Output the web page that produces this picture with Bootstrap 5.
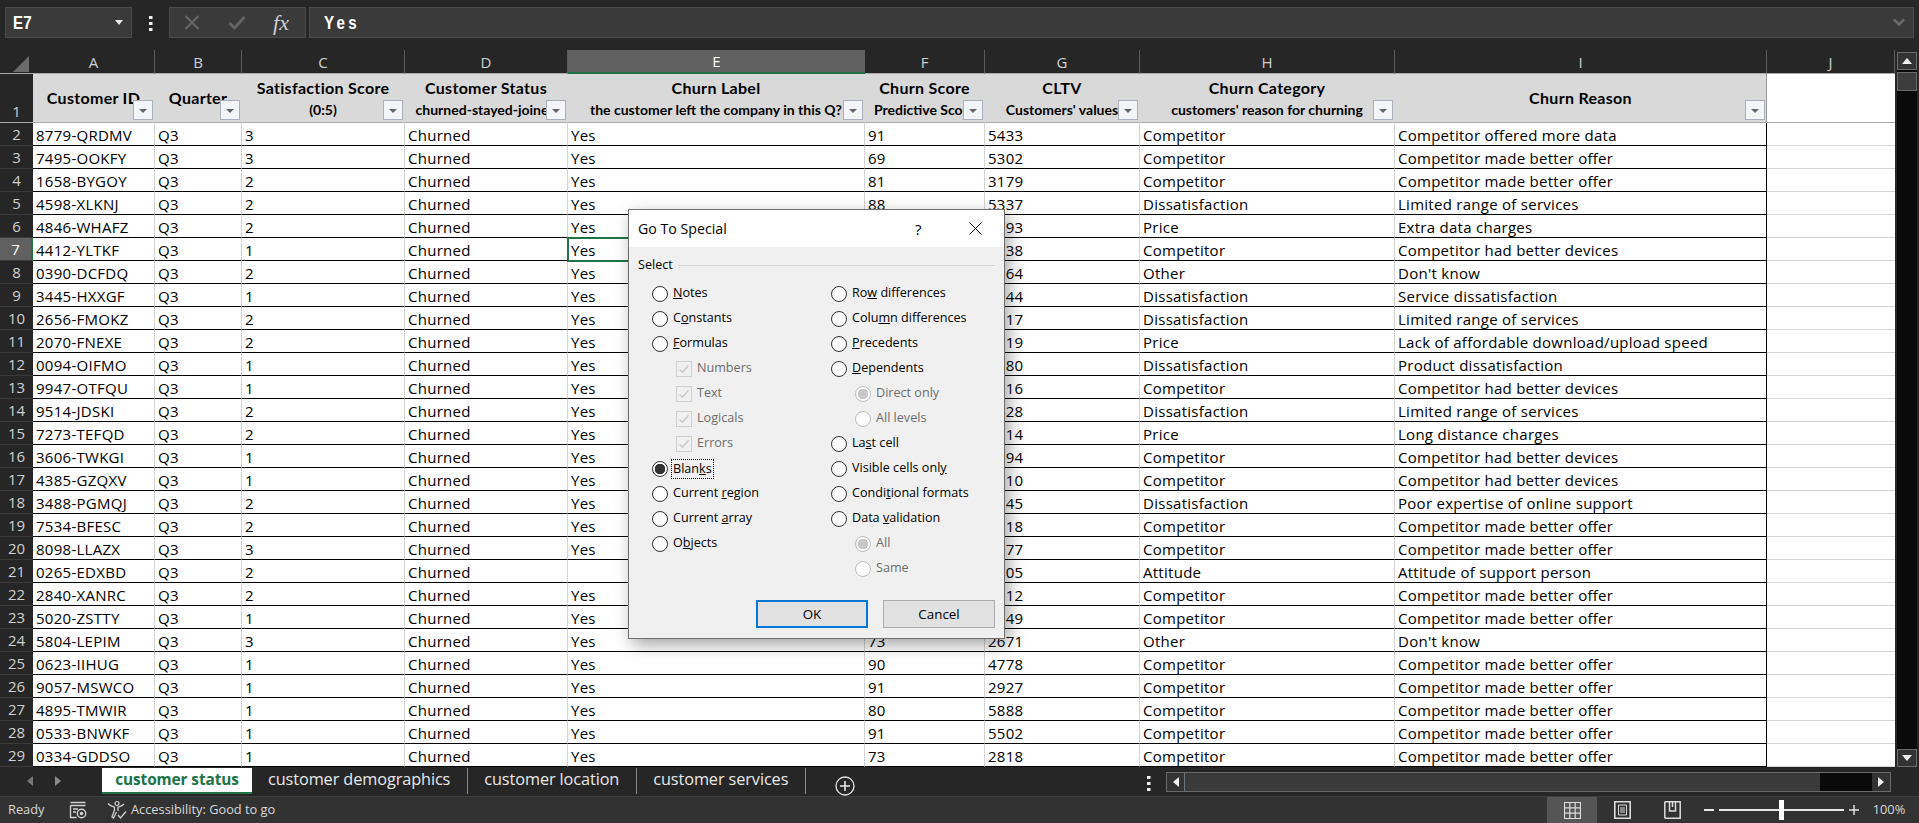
<!DOCTYPE html>
<html lang="en">
<head>
<meta charset="utf-8">
<title>Go To Special</title>
<link href="https://cdn.jsdelivr.net/npm/bootstrap@5.3.0/dist/css/bootstrap.min.css" rel="stylesheet">
<style>
html,body{height:100%;}
body{background:#262626;overflow:hidden;font-family:"Open Sans","Noto Sans",sans-serif;position:relative;}
.app-shell{height:823px;}
/* formula bar */
.fx-bar{height:50px;flex:none;padding:7px 5px 0;background:#262626;}
.fx-box{height:31px;background:#3a3a3a;border:1px solid #4a4a4a;}
.name-box{width:127px;padding:0 8px 0 7px;}
.strong-narrow{display:inline-block;font-family:"Liberation Sans",sans-serif;font-weight:700;color:#fff;font-size:19px;line-height:1;transform:scaleX(.8);transform-origin:left center;}
.dots-grip{width:37px;}
.fn-box{width:137px;padding:0 14px;}
.fn-text{font-family:"Liberation Serif",serif;font-style:italic;font-size:22px;color:#cfcfcf;line-height:1;margin-right:2px;}
.formula-box{margin-left:3px;flex:1;padding:0 8px 0 14px;}
.formula-val{letter-spacing:4px;}
/* sheet */
.sheet-wrap{height:717px;flex:none;overflow:hidden;}
.sheet-scroll-host{width:1895px;flex:none;overflow:hidden;background:#fff;}
.sheet-grid{table-layout:fixed;width:1895px;border-collapse:separate;border-spacing:0;font-family:"Open Sans","Noto Sans",sans-serif;font-size:15px;letter-spacing:.27px;color:#000;}
.sheet-grid td{height:23px;padding:1px 0 0 3px;line-height:20px;white-space:nowrap;overflow:hidden;border-right:1px solid #d4d4d4;border-bottom:1px solid #000;background:#fff;}
.sheet-grid td.edge{border-right:1px solid #000;}
.sheet-grid td.free{border-bottom:1px solid #d4d4d4;border-right:0;}
.sheet-grid td.active-cell{outline:2px solid #217346;outline-offset:-1px;position:relative;}
.sheet-grid thead th{height:24px;background:#262626;color:#d0d0d0;font-family:"Open Sans",sans-serif;font-weight:400;font-size:15px;letter-spacing:0;text-align:center;border-right:1px solid #5a5a5a;border-bottom:1px solid #aaa;padding:0;line-height:22px;}
.sheet-grid thead th.col-on{background:#606060;color:#fff;border-bottom:2px solid #217346;border-right:0;}
.sheet-grid thead th.corner{border-right:0;position:relative;vertical-align:bottom;}
.corner svg{display:block;}
.sheet-grid tbody th{background:#262626;color:#d0d0d0;font-family:"Open Sans",sans-serif;font-weight:400;font-size:15px;letter-spacing:0;text-align:center;padding:0;border-bottom:1px solid #3a3a3a;line-height:22px;}
.sheet-grid tbody th.row-on{background:#606060;color:#fff;border-right:2px solid #217346;}
.sheet-grid tr.head-row th.num{height:49px;vertical-align:bottom;border-bottom:1px solid #aaa;}
.sheet-grid tr.head-row td{height:49px;padding:0;background:#d9d9d9;border-bottom:1px solid #aaa;border-right:1px solid #d9d9d9;position:relative;text-align:center;font-family:Lato,"Liberation Sans",sans-serif;font-weight:700;line-height:1;letter-spacing:.3px;}
.sheet-grid tr.head-row td.free{background:#fff;border-right:0;}
.sheet-grid tr.head-row td.edge{border-right:1px solid #999;}
.head-main{display:block;font-size:16px;}
.head-sub{display:block;font-size:14px;margin-top:7px;letter-spacing:0;}
.head-one{font-size:16px;padding-bottom:1px;}
.filter-btn{position:absolute;right:1px;bottom:2px;width:20px;height:20px;background:#f3f5f9;border:1px solid #a9b0bb;}
.filter-btn::after{content:"";position:absolute;left:5px;top:8px;border:4px solid transparent;border-top:4px solid #666;border-bottom:0;}
/* scrollbar */
.v-scroll{width:20px;margin:2px 2px 0 2px;flex:none;background:#0a0a0a;}
.sb-btn{height:18px;flex:none;background:#333;border:1px solid #6a6a6a;}
.sb-thumb{height:19px;margin-top:2px;background:#3c3c3c;border:1px solid #6a6a6a;flex:none;}
/* tabs */
.tab-row{height:29px;flex:none;background:#262626;}
.tab-nav{width:102px;padding-left:26px;gap:20px;}
.sheet-tab{height:26px;margin-top:1px;font-size:16.3px;line-height:23px;color:#e8e8e8;padding:0 17px 0 16px;border-right:1px solid #8a8a8a;letter-spacing:-.1px;white-space:nowrap;}
.sheet-tab.tab-on{background:#fff;color:#217346;font-size:15.4px;font-weight:700;border-right:0;border-bottom:2px solid #217346;padding:0 8px;width:150px;}
.h-scroll-host{position:absolute;left:1166px;top:772px;width:725px;height:20px;border:1px solid #6a6a6a;background:#3a3a3a;}
.hs-end{width:18px;background:#333;flex:none;}
.hs-track{width:52px;background:#0a0a0a;flex:none;}
.grip2{position:absolute;left:1147px;top:775px;}
.plus-wrap{margin-left:29px;margin-top:5px;}
/* status */
.status-row{height:27px;flex:none;background:#323232;border-top:1px solid #3e3e3e;color:#d8d8d8;font-size:12.8px;}
.status-ready{padding-left:8px;width:69px;}
.a11y-icon{margin-left:20px;}
.view-btn{width:50px;height:26px;}
.view-btn.view-on{background:#555;}
.zoom-group{margin-left:7px;}
.zoom-pct{width:60px;text-align:center;}
.zoom-line{width:125px;height:2px;background:#e8e8e8;position:relative;margin:0 5px;}
.zoom-knob{position:absolute;left:60px;top:-9px;width:5px;height:20px;background:#fff;}
/* dialog */
.go-dialog{position:absolute;left:628px;top:209px;width:377px;height:430px;background:#f0f0f0;border:1px solid #6f6f6f;box-shadow:4px 6px 16px rgba(0,0,0,.35);font-family:"Open Sans","Noto Sans",sans-serif;font-size:12.6px;color:#000;}
.dlg-title{height:37px;background:#fff;padding:0 22px 0 9px;font-size:14.2px;}
.dlg-help{position:absolute;left:286px;top:6px;font-size:15px;line-height:26px;}
.dlg-body{padding:0 9px 10px 9px;}
.dlg-group{height:22px;margin-top:7px;gap:5px;}
.dlg-rule{height:1px;background:#d5d5d5;flex:1;}
.dlg-cols{padding-left:14px;margin-top:5px;}
.dlg-col{width:179px;flex:none;}
.dlg-col-end{flex:1;min-width:0;}
.opt-row{height:25px;gap:5px;}
.opt-sub{padding-left:24px;}
.opt-off{color:#6d6d6d;}
.opt-focus{outline:1px dotted #000;padding:0 1px;margin-left:-1px;line-height:18px;}
.go-dialog .form-check-input{margin:0;width:16px;height:16px;flex:none;opacity:1;background-color:#fff;box-shadow:none;}
.go-dialog .form-check-input[type=radio]{border:1.4px solid #333;border-radius:50%;background-image:none;}
.go-dialog .form-check-input[type=radio]:checked{background-color:#fff;background-image:radial-gradient(circle,#333 0 5px,transparent 5.5px);}
.go-dialog .form-check-input[type=radio]:disabled{border-color:#bcbcbc;background-image:none;}
.go-dialog .form-check-input[type=radio]:disabled:checked{background-image:radial-gradient(circle,#c8c8c8 0 5px,transparent 5.5px);}
.go-dialog .form-check-input[type=checkbox]:disabled{border:1px solid #cfcfcf;border-radius:0;background-color:#f0f0f0;background-image:url("data:image/svg+xml,%3csvg xmlns='http://www.w3.org/2000/svg' viewBox='0 0 16 16'%3e%3cpath fill='none' stroke='%23c9c9c9' stroke-width='1.6' d='M3 8.5l3.2 3.2 7-8'/%3e%3c/svg%3e");background-size:100% 100%;}
.dlg-actions{margin-top:auto;gap:15px;}
.dlg-btn{width:112px;height:28px;padding:0;border-radius:0;background:#e1e1e1;border:1px solid #adadad;font-size:13.4px;line-height:24px;color:#000;}
.dlg-btn.dlg-primary{border:2px solid #0078d7;}
</style>
</head>
<body>
<div class="app-shell d-flex flex-column">

  <div class="fx-bar d-flex align-items-start">
    <div class="fx-box name-box d-flex align-items-center justify-content-between">
      <span class="strong-narrow">E7</span>
      <svg width="8" height="5" viewBox="0 0 8 5"><path d="M0 0h8L4 5z" fill="#e8e8e8"/></svg>
    </div>
    <div class="dots-grip d-flex justify-content-center align-self-stretch">
      <svg width="4" height="31" viewBox="0 0 4 31"><path d="M0 9h3.500v3H0zM0 15h3.500v3H0zM0 21h3.500v3H0z" fill="#f0f0f0"/></svg>
    </div>
    <div class="fx-box fn-box d-flex align-items-center justify-content-between">
      <svg width="16" height="15" viewBox="0 0 16 15"><path d="M1.500 1l13 13M14.500 1l-13 13" stroke="#646464" stroke-width="2.200" fill="none"/></svg>
      <svg width="18" height="15" viewBox="0 0 18 15"><path d="M1.500 8l5 5L16.500 2" stroke="#646464" stroke-width="3" fill="none"/></svg>
      <span class="fn-text">fx</span>
    </div>
    <div class="fx-box formula-box d-flex align-items-center justify-content-between">
      <span class="strong-narrow formula-val">Yes</span>
      <svg width="12" height="9" viewBox="0 0 12 9"><path d="M1 1.500l5 5 5-5" stroke="#6a6a6a" stroke-width="2.600" fill="none"/></svg>
    </div>
  </div>

  <div class="sheet-wrap d-flex">
    <div class="sheet-scroll-host">
      <table class="sheet-grid">
        <colgroup><col style="width:33px"><col style="width:122px"><col style="width:87px"><col style="width:163px"><col style="width:163px"><col style="width:297px"><col style="width:120px"><col style="width:155px"><col style="width:255px"><col style="width:372px"><col style="width:128px"></colgroup>
        <thead><tr>
          <th class="corner"><svg width="33" height="22" viewBox="0 0 33 22"><path d="M29 5v16H13z" fill="#6b6b6b"/></svg></th>
          <th>A</th><th>B</th><th>C</th><th>D</th><th class="col-on">E</th><th>F</th><th>G</th><th>H</th><th>I</th><th>J</th>
        </tr></thead>
        <tbody>
          <tr class="head-row"><th class="num">1</th>
            <td><div class="head-one">Customer ID</div><span class="filter-btn"></span></td>
            <td><div class="head-one">Quarter</div><span class="filter-btn"></span></td>
            <td><span class="head-main">Satisfaction Score</span><span class="head-sub">(0:5)</span><span class="filter-btn"></span></td>
            <td><span class="head-main">Customer Status</span><span class="head-sub">churned-stayed-joined</span><span class="filter-btn"></span></td>
            <td><span class="head-main">Churn Label</span><span class="head-sub">the customer left the company in this Q?</span><span class="filter-btn"></span></td>
            <td><span class="head-main">Churn Score</span><span class="head-sub">Predictive Score</span><span class="filter-btn"></span></td>
            <td><span class="head-main">CLTV</span><span class="head-sub">Customers' values</span><span class="filter-btn"></span></td>
            <td><span class="head-main">Churn Category</span><span class="head-sub">customers' reason for churning</span><span class="filter-btn"></span></td>
            <td class="edge"><div class="head-one">Churn Reason</div><span class="filter-btn"></span></td>
            <td class="free"></td>
          </tr>
          <tr><th>2</th><td>8779-QRDMV</td><td>Q3</td><td>3</td><td>Churned</td><td>Yes</td><td>91</td><td>5433</td><td>Competitor</td><td class="edge">Competitor offered more data</td><td class="free"></td></tr>
          <tr><th>3</th><td>7495-OOKFY</td><td>Q3</td><td>3</td><td>Churned</td><td>Yes</td><td>69</td><td>5302</td><td>Competitor</td><td class="edge">Competitor made better offer</td><td class="free"></td></tr>
          <tr><th>4</th><td>1658-BYGOY</td><td>Q3</td><td>2</td><td>Churned</td><td>Yes</td><td>81</td><td>3179</td><td>Competitor</td><td class="edge">Competitor made better offer</td><td class="free"></td></tr>
          <tr><th>5</th><td>4598-XLKNJ</td><td>Q3</td><td>2</td><td>Churned</td><td>Yes</td><td>88</td><td>5337</td><td>Dissatisfaction</td><td class="edge">Limited range of services</td><td class="free"></td></tr>
          <tr><th>6</th><td>4846-WHAFZ</td><td>Q3</td><td>2</td><td>Churned</td><td>Yes</td><td></td><td>2793</td><td>Price</td><td class="edge">Extra data charges</td><td class="free"></td></tr>
          <tr><th class="row-on">7</th><td>4412-YLTKF</td><td>Q3</td><td>1</td><td>Churned</td><td class="active-cell">Yes</td><td></td><td>3238</td><td>Competitor</td><td class="edge">Competitor had better devices</td><td class="free"></td></tr>
          <tr><th>8</th><td>0390-DCFDQ</td><td>Q3</td><td>2</td><td>Churned</td><td>Yes</td><td></td><td>3864</td><td>Other</td><td class="edge">Don't know</td><td class="free"></td></tr>
          <tr><th>9</th><td>3445-HXXGF</td><td>Q3</td><td>1</td><td>Churned</td><td>Yes</td><td></td><td>4144</td><td>Dissatisfaction</td><td class="edge">Service dissatisfaction</td><td class="free"></td></tr>
          <tr><th>10</th><td>2656-FMOKZ</td><td>Q3</td><td>2</td><td>Churned</td><td>Yes</td><td></td><td>5617</td><td>Dissatisfaction</td><td class="edge">Limited range of services</td><td class="free"></td></tr>
          <tr><th>11</th><td>2070-FNEXE</td><td>Q3</td><td>2</td><td>Churned</td><td>Yes</td><td></td><td>4219</td><td>Price</td><td class="edge">Lack of affordable download/upload speed</td><td class="free"></td></tr>
          <tr><th>12</th><td>0094-OIFMO</td><td>Q3</td><td>1</td><td>Churned</td><td>Yes</td><td></td><td>4980</td><td>Dissatisfaction</td><td class="edge">Product dissatisfaction</td><td class="free"></td></tr>
          <tr><th>13</th><td>9947-OTFQU</td><td>Q3</td><td>1</td><td>Churned</td><td>Yes</td><td></td><td>3116</td><td>Competitor</td><td class="edge">Competitor had better devices</td><td class="free"></td></tr>
          <tr><th>14</th><td>9514-JDSKI</td><td>Q3</td><td>2</td><td>Churned</td><td>Yes</td><td></td><td>4428</td><td>Dissatisfaction</td><td class="edge">Limited range of services</td><td class="free"></td></tr>
          <tr><th>15</th><td>7273-TEFQD</td><td>Q3</td><td>2</td><td>Churned</td><td>Yes</td><td></td><td>5214</td><td>Price</td><td class="edge">Long distance charges</td><td class="free"></td></tr>
          <tr><th>16</th><td>3606-TWKGI</td><td>Q3</td><td>1</td><td>Churned</td><td>Yes</td><td></td><td>3394</td><td>Competitor</td><td class="edge">Competitor had better devices</td><td class="free"></td></tr>
          <tr><th>17</th><td>4385-GZQXV</td><td>Q3</td><td>1</td><td>Churned</td><td>Yes</td><td></td><td>2810</td><td>Competitor</td><td class="edge">Competitor had better devices</td><td class="free"></td></tr>
          <tr><th>18</th><td>3488-PGMQJ</td><td>Q3</td><td>2</td><td>Churned</td><td>Yes</td><td></td><td>4745</td><td>Dissatisfaction</td><td class="edge">Poor expertise of online support</td><td class="free"></td></tr>
          <tr><th>19</th><td>7534-BFESC</td><td>Q3</td><td>2</td><td>Churned</td><td>Yes</td><td></td><td>5518</td><td>Competitor</td><td class="edge">Competitor made better offer</td><td class="free"></td></tr>
          <tr><th>20</th><td>8098-LLAZX</td><td>Q3</td><td>3</td><td>Churned</td><td>Yes</td><td></td><td>3677</td><td>Competitor</td><td class="edge">Competitor made better offer</td><td class="free"></td></tr>
          <tr><th>21</th><td>0265-EDXBD</td><td>Q3</td><td>2</td><td>Churned</td><td></td><td></td><td>4905</td><td>Attitude</td><td class="edge">Attitude of support person</td><td class="free"></td></tr>
          <tr><th>22</th><td>2840-XANRC</td><td>Q3</td><td>2</td><td>Churned</td><td>Yes</td><td></td><td>2312</td><td>Competitor</td><td class="edge">Competitor made better offer</td><td class="free"></td></tr>
          <tr><th>23</th><td>5020-ZSTTY</td><td>Q3</td><td>1</td><td>Churned</td><td>Yes</td><td></td><td>5149</td><td>Competitor</td><td class="edge">Competitor made better offer</td><td class="free"></td></tr>
          <tr><th>24</th><td>5804-LEPIM</td><td>Q3</td><td>3</td><td>Churned</td><td>Yes</td><td>73</td><td>2671</td><td>Other</td><td class="edge">Don't know</td><td class="free"></td></tr>
          <tr><th>25</th><td>0623-IIHUG</td><td>Q3</td><td>1</td><td>Churned</td><td>Yes</td><td>90</td><td>4778</td><td>Competitor</td><td class="edge">Competitor made better offer</td><td class="free"></td></tr>
          <tr><th>26</th><td>9057-MSWCO</td><td>Q3</td><td>1</td><td>Churned</td><td>Yes</td><td>91</td><td>2927</td><td>Competitor</td><td class="edge">Competitor made better offer</td><td class="free"></td></tr>
          <tr><th>27</th><td>4895-TMWIR</td><td>Q3</td><td>1</td><td>Churned</td><td>Yes</td><td>80</td><td>5888</td><td>Competitor</td><td class="edge">Competitor made better offer</td><td class="free"></td></tr>
          <tr><th>28</th><td>0533-BNWKF</td><td>Q3</td><td>1</td><td>Churned</td><td>Yes</td><td>91</td><td>5502</td><td>Competitor</td><td class="edge">Competitor made better offer</td><td class="free"></td></tr>
          <tr><th>29</th><td>0334-GDDSO</td><td>Q3</td><td>1</td><td>Churned</td><td>Yes</td><td>73</td><td>2818</td><td>Competitor</td><td class="edge">Competitor made better offer</td><td class="free"></td></tr>
        </tbody>
      </table>
    </div>
    <div class="v-scroll d-flex flex-column">
      <div class="sb-btn d-flex align-items-center justify-content-center"><svg width="10" height="6" viewBox="0 0 10 6"><path d="M5 0l5 6H0z" fill="#f0f0f0"/></svg></div>
      <div class="sb-thumb"></div>
      <div class="flex-grow-1"></div>
      <div class="sb-btn d-flex align-items-center justify-content-center"><svg width="10" height="6" viewBox="0 0 10 6"><path d="M0 0h10L5 6z" fill="#f0f0f0"/></svg></div>
    </div>
  </div>

  <div class="tab-row d-flex align-items-start">
    <div class="tab-nav d-flex align-items-center pt-2">
      <svg width="8" height="12" viewBox="0 0 8 12"><path d="M7 1v10L1 6z" fill="#777"/></svg>
      <svg width="8" height="12" viewBox="0 0 8 12"><path d="M1 1v10l6-5z" fill="#8a8a8a"/></svg>
    </div>
    <div class="sheet-tab tab-on text-center">customer status</div>
    <div class="sheet-tab">customer demographics</div>
    <div class="sheet-tab">customer location</div>
    <div class="sheet-tab">customer services</div>
    <div class="plus-wrap"><svg width="20" height="20" viewBox="0 0 20 20"><circle cx="10" cy="10" r="9" fill="none" stroke="#e8e8e8" stroke-width="1.300"/><path d="M10 5v10M5 10h10" stroke="#e8e8e8" stroke-width="1.600"/></svg></div>
  </div>

  <div class="status-row d-flex align-items-center">
    <div class="status-ready">Ready</div>
    <svg width="18" height="18" viewBox="0 0 18 18"><path d="M1.500 1.500h15M1.500 4.500h15M1.500 4.500v12h6M4 8h5M4 11h3" fill="none" stroke="#cfcfcf" stroke-width="1.400"/><circle cx="12.500" cy="12.500" r="4.200" fill="none" stroke="#cfcfcf" stroke-width="1.400"/><circle cx="12.500" cy="12.500" r="1.800" fill="#cfcfcf"/></svg>
    <svg class="a11y-icon" width="20" height="20" viewBox="0 0 20 20"><circle cx="10" cy="3.500" r="2" fill="none" stroke="#cfcfcf" stroke-width="1.200"/><path d="M1 3.500c2 2.500 5 3 6.500 3.500v3L5 17l1.500 1 3-6M17 4c-2 2-4.500 2.500-6 3v4M11 15l2.500 3L19 11.500" fill="none" stroke="#cfcfcf" stroke-width="1.300"/></svg>
    <span class="ms-1">Accessibility: Good to go</span>
    <div class="ms-auto d-flex align-items-center">
      <div class="view-btn view-on d-flex align-items-center justify-content-center"><svg width="17" height="17" viewBox="0 0 17 17"><path d="M.5.500h16v16H.500zM5.800.500v16M11.200.500v16M.5 5.800h16M.5 11.200h16" fill="none" stroke="#dcdcdc" stroke-width="1.200"/></svg></div>
      <div class="view-btn d-flex align-items-center justify-content-center"><svg width="17" height="18" viewBox="0 0 17 18"><path d="M.8.800h15.400v16.400H.800z" fill="none" stroke="#dcdcdc" stroke-width="1.600"/><path d="M4.500 4h8v10h-8zM6 7h5M6 9h5M6 11h5" fill="none" stroke="#dcdcdc"/></svg></div>
      <div class="view-btn d-flex align-items-center justify-content-center"><svg width="17" height="18" viewBox="0 0 17 18"><path d="M.8.800h15.400v16.400H.800M.8.800v16.400M5.500 1v9h6V1M8.500 1v5" fill="none" stroke="#dcdcdc" stroke-width="1.500"/></svg></div>
      <div class="zoom-group d-flex align-items-center">
        <svg width="10" height="2" viewBox="0 0 10 2"><path d="M0 0h10v2H0z" fill="#e8e8e8"/></svg>
        <div class="zoom-line"><div class="zoom-knob"></div></div>
        <svg width="10" height="10" viewBox="0 0 10 10"><path d="M5 0v10M0 5h10" stroke="#e8e8e8" stroke-width="1.400"/></svg>
      </div>
      <div class="zoom-pct">100%</div>
    </div>
  </div>
</div>

<svg class="grip2" width="4" height="16" viewBox="0 0 4 16"><path d="M0 1h3.500v3H0zM0 7h3.500v3H0zM0 13h3.500v3H0z" fill="#f0f0f0"/></svg>
<div class="h-scroll-host d-flex">
  <div class="hs-end d-flex align-items-center justify-content-center border-end border-secondary"><svg width="6" height="10" viewBox="0 0 6 10"><path d="M6 0v10L0 5z" fill="#f0f0f0"/></svg></div>
  <div class="flex-grow-1"></div>
  <div class="hs-track"></div>
  <div class="hs-end d-flex align-items-center justify-content-center"><svg width="6" height="10" viewBox="0 0 6 10"><path d="M0 0v10l6-5z" fill="#f0f0f0"/></svg></div>
</div>

<div class="go-dialog d-flex flex-column" role="dialog">
  <div class="dlg-title d-flex align-items-center justify-content-between">
    <span>Go To Special</span>
    <span class="dlg-help">?</span>
    <svg width="13" height="13" viewBox="0 0 13 13"><path d="M.5.500l12 12M12.500.500l-12 12" stroke="#000" fill="none"/></svg>
  </div>
  <div class="dlg-body d-flex flex-column flex-grow-1">
    <div class="dlg-group d-flex align-items-center"><span>Select</span><span class="dlg-rule"></span></div>
    <div class="dlg-cols d-flex">
      <div class="dlg-col">
        <div class="opt-row d-flex align-items-center"><input class="form-check-input" type="radio" name="s"><span><u>N</u>otes</span></div>
        <div class="opt-row d-flex align-items-center"><input class="form-check-input" type="radio" name="s"><span>C<u>o</u>nstants</span></div>
        <div class="opt-row d-flex align-items-center"><input class="form-check-input" type="radio" name="s"><span><u>F</u>ormulas</span></div>
        <div class="opt-row opt-sub opt-off d-flex align-items-center"><input class="form-check-input" type="checkbox" checked disabled><span>Numbers</span></div>
        <div class="opt-row opt-sub opt-off d-flex align-items-center"><input class="form-check-input" type="checkbox" checked disabled><span>Text</span></div>
        <div class="opt-row opt-sub opt-off d-flex align-items-center"><input class="form-check-input" type="checkbox" checked disabled><span>Logicals</span></div>
        <div class="opt-row opt-sub opt-off d-flex align-items-center"><input class="form-check-input" type="checkbox" checked disabled><span>Errors</span></div>
        <div class="opt-row d-flex align-items-center"><input class="form-check-input" type="radio" name="s" checked><span class="opt-focus">Blan<u>k</u>s</span></div>
        <div class="opt-row d-flex align-items-center"><input class="form-check-input" type="radio" name="s"><span>Current <u>r</u>egion</span></div>
        <div class="opt-row d-flex align-items-center"><input class="form-check-input" type="radio" name="s"><span>Current <u>a</u>rray</span></div>
        <div class="opt-row d-flex align-items-center"><input class="form-check-input" type="radio" name="s"><span>O<u>b</u>jects</span></div>
      </div>
      <div class="dlg-col-end">
        <div class="opt-row d-flex align-items-center"><input class="form-check-input" type="radio" name="s"><span>Ro<u>w</u> differences</span></div>
        <div class="opt-row d-flex align-items-center"><input class="form-check-input" type="radio" name="s"><span>Colu<u>m</u>n differences</span></div>
        <div class="opt-row d-flex align-items-center"><input class="form-check-input" type="radio" name="s"><span><u>P</u>recedents</span></div>
        <div class="opt-row d-flex align-items-center"><input class="form-check-input" type="radio" name="s"><span><u>D</u>ependents</span></div>
        <div class="opt-row opt-sub opt-off d-flex align-items-center"><input class="form-check-input" type="radio" name="d" checked disabled><span>Direct only</span></div>
        <div class="opt-row opt-sub opt-off d-flex align-items-center"><input class="form-check-input" type="radio" name="d" disabled><span>All levels</span></div>
        <div class="opt-row d-flex align-items-center"><input class="form-check-input" type="radio" name="s"><span>La<u>s</u>t cell</span></div>
        <div class="opt-row d-flex align-items-center"><input class="form-check-input" type="radio" name="s"><span>Visible cells onl<u>y</u></span></div>
        <div class="opt-row d-flex align-items-center"><input class="form-check-input" type="radio" name="s"><span>Condi<u>t</u>ional formats</span></div>
        <div class="opt-row d-flex align-items-center"><input class="form-check-input" type="radio" name="s"><span>Data <u>v</u>alidation</span></div>
        <div class="opt-row opt-sub opt-off d-flex align-items-center"><input class="form-check-input" type="radio" name="v" checked disabled><span>All</span></div>
        <div class="opt-row opt-sub opt-off d-flex align-items-center"><input class="form-check-input" type="radio" name="v" disabled><span>Same</span></div>
      </div>
    </div>
    <div class="dlg-actions d-flex justify-content-end">
      <button type="button" class="btn dlg-btn dlg-primary">OK</button>
      <button type="button" class="btn dlg-btn">Cancel</button>
    </div>
  </div>
</div>
<script src="https://cdn.jsdelivr.net/npm/bootstrap@5.3.0/dist/js/bootstrap.bundle.min.js"></script>
</body>
</html>
